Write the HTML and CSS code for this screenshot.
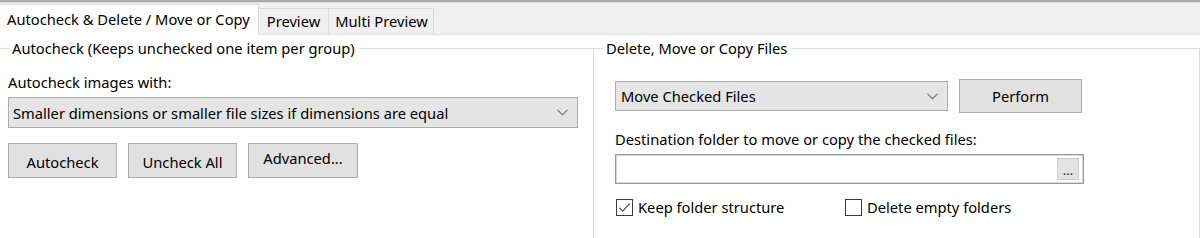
FILE: index.html
```html
<!DOCTYPE html>
<html>
<head>
<meta charset="utf-8">
<link rel="stylesheet" href="styles.css">
</head>
<body>
<div class="window">
  <div class="topline"></div>
  <div class="tabs">
    <div class="tab active">Autocheck &amp; Delete / Move or Copy</div>
    <div class="tab tab-preview">Preview</div>
    <div class="tab tab-multi">Multi Preview</div>
  </div>
  <div class="page">
    <section class="group group-left">
      <div class="group-head">
        <span class="line line-lead"></span>
        <span class="group-title">Autocheck (Keeps unchecked one item per group)</span>
        <span class="line line-fill"></span>
      </div>
      <div class="label label-auto">Autocheck images with:</div>
      <div class="combo combo-wide">
        <span class="combo-text">Smaller dimensions or smaller file sizes if dimensions are equal</span>
        <svg class="chev" width="11" height="7" viewBox="0 0 11 7"><path d="M0.5 0.8 L5.5 5.8 L10.5 0.8" fill="none" stroke="#6d6d6d" stroke-width="1.1"/></svg>
      </div>
      <div class="btn-row">
        <div class="btn">Autocheck</div>
        <div class="btn">Uncheck All</div>
        <div class="btn btn-adv">Advanced...</div>
      </div>
    </section>
    <section class="group group-right">
      <div class="group-head">
        <span class="line line-lead"></span>
        <span class="group-title">Delete, Move or Copy Files</span>
        <span class="line line-fill"></span>
      </div>
      <div class="body-right">
        <div class="action-row">
          <div class="combo combo-action">
            <span class="combo-text">Move Checked Files</span>
            <svg class="chev" width="11" height="7" viewBox="0 0 11 7"><path d="M0.5 0.8 L5.5 5.8 L10.5 0.8" fill="none" stroke="#6d6d6d" stroke-width="1.1"/></svg>
          </div>
          <div class="btn btn-perform">Perform</div>
        </div>
        <div class="label label-dest">Destination folder to move or copy the checked files:</div>
        <div class="input">
          <div class="browse">...</div>
        </div>
        <div class="check-row">
          <label class="check check-keep">
            <span class="box">
              <svg width="15" height="15" viewBox="0 0 15 15"><path d="M2.2 7.6 L5.8 11.2 L12.8 3.4" fill="none" stroke="#4a4a4a" stroke-width="1.2"/></svg>
            </span>
            <span class="check-text">Keep folder structure</span>
          </label>
          <label class="check">
            <span class="box"></span>
            <span class="check-text">Delete empty folders</span>
          </label>
        </div>
      </div>
    </section>
  </div>
</div>
</body>
</html>
```

FILE: styles.css
```css
html, body {
  margin: 0;
  padding: 0;
  background: #ffffff;
}
body {
  width: 1200px;
  height: 238px;
  overflow: hidden;
  font-family: "Noto Sans", "Open Sans", "DejaVu Sans", sans-serif;
  font-size: 14.7px;
  color: #000000;
}
.window {
  width: 1200px;
  height: 238px;
  display: flex;
  flex-direction: column;
}
.topline {
  height: 2px;
  background: #a9a9a9;
  border-bottom: 1px solid #dedede;
}
.tabs {
  height: 31px;
  display: flex;
  align-items: flex-end;
  background: #f0f0f0;
  border-bottom: 1px solid #e0e0e0;
}
.tab {
  height: 25px;
  line-height: 24px;
  padding: 0 5px;
  border: 1px solid #d9d9d9;
  border-bottom: none;
  margin-left: -1px;
  background: #f0f0f0;
  white-space: nowrap;
}
.tab.active {
  height: 30px;
  line-height: 28px;
  padding: 0 8px 0 7px;
  margin-left: 0;
  margin-bottom: -1px;
  background: #ffffff;
  border-left: none;
  position: relative;
}
.tab-preview {
  padding: 0 8px;
}
.tab-multi {
  padding: 0 5px 0 6px;
}
.page {
  flex: 1;
  display: flex;
  padding-top: 3px;
  background: #ffffff;
}
.group {
  display: flex;
  flex-direction: column;
}
.group-left {
  width: 593px;
  padding-left: 8px;
  box-sizing: border-box;
}
.group-right {
  width: 607px;
  box-sizing: border-box;
}
.group-head {
  height: 20px;
  display: flex;
  align-items: center;
}
.line {
  height: 1px;
  background: #dcdcdc;
}
.group-left .group-head {
  margin-left: -8px;
}
.group-left .line-lead {
  width: 9px;
}
.group-right .line-lead {
  width: 11px;
  margin-left: -1px;
}
.group-title {
  padding: 0 4px 0 3px;
  line-height: 20px;
  white-space: nowrap;
}
.line-fill {
  flex: 1;
}
.body-right {
  flex: 1;
  margin-top: -10px;
  padding: 31px 0 0 21px;
  border-left: 1px solid #dcdcdc;
  border-right: 1px solid #dcdcdc;
}
.label {
  line-height: 20px;
  white-space: nowrap;
}
.label-auto {
  margin-top: 14px;
}
.combo {
  box-sizing: border-box;
  height: 31px;
  border: 1px solid #adadad;
  background: #e5e5e5;
  display: flex;
  align-items: center;
  padding: 0 9px 0 4px;
}
.combo-wide {
  margin-top: 5px;
  width: 570px;
}
.combo-text {
  flex: 1;
  white-space: nowrap;
}
.chev {
  display: block;
}
.btn-row {
  display: flex;
  gap: 11px;
  margin-top: 15px;
}
.btn {
  box-sizing: border-box;
  width: 109px;
  height: 35px;
  border: 1px solid #adadad;
  background: #e1e1e1;
  display: flex;
  align-items: center;
  justify-content: center;
  padding-top: 3px;
  white-space: nowrap;
}
.btn-adv {
  width: 110px;
  padding-top: 0;
  padding-bottom: 6px;
}
.action-row {
  display: flex;
  align-items: center;
  gap: 11px;
}
.combo-action {
  width: 333px;
  height: 30px;
  padding-left: 5px;
}
.btn-perform {
  width: 123px;
  height: 34px;
  padding-top: 0;
}
.label-dest {
  margin-top: 16px;
}
.input {
  box-sizing: border-box;
  margin-top: 5px;
  width: 469px;
  height: 30px;
  border: 1px solid #999999;
  box-shadow: inset 0 0 0 1px #d6d6d6;
  background: #ffffff;
  display: flex;
  justify-content: flex-end;
  align-items: center;
  padding-right: 4px;
}
.browse {
  box-sizing: border-box;
  width: 22px;
  height: 22px;
  border: 1px solid #cccccc;
  background: #e3e3e3;
  font-size: 13px;
  line-height: 22px;
  text-align: center;
  color: #20205a;
}
.check-row {
  display: flex;
  align-items: center;
  margin-top: 13px;
  padding-left: 1px;
}
.check {
  display: flex;
  align-items: center;
  gap: 5px;
  line-height: 20px;
  white-space: nowrap;
}
.check-keep {
  width: 229px;
}
.box {
  box-sizing: border-box;
  width: 17px;
  height: 17px;
  border: 1px solid #3a3a3a;
  background: #ffffff;
  display: flex;
  align-items: center;
  justify-content: center;
}
.box svg {
  display: block;
}
```
